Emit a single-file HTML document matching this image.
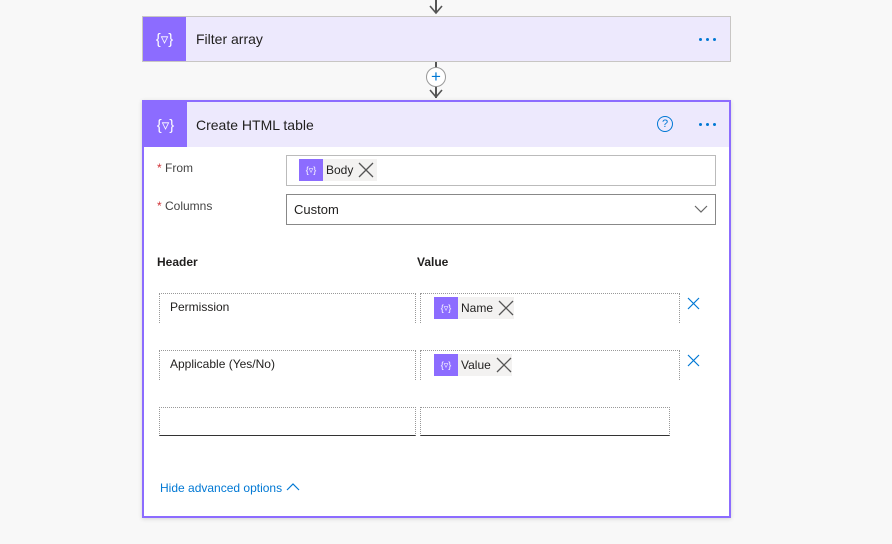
<!DOCTYPE html>
<html><head><style>
*{box-sizing:border-box;margin:0;padding:0}
body{width:892px;height:544px;background:#f8f8f8;font-family:"Liberation Sans",sans-serif;position:relative;overflow:hidden;color:#201f1e}
.a{position:absolute}
.ic{background:#8c6cff;display:flex;align-items:center;justify-content:center;color:#fff}
.tok{position:absolute;height:22px;background:#f3f2f1;display:flex;align-items:center;font-size:12px}
.tok .ic{width:24px;height:22px;font-size:9px}
.tok svg{margin-left:5px}
.dash{border:1px dotted #999}
.dots{position:absolute;display:flex;gap:4px}
.dots i{width:3px;height:3px;border-radius:50%;background:#0078d4;display:block}
</style></head><body>
<div class="a" style="left:435px;top:0;width:2px;height:12px;background:#555"></div>
<svg class="a" style="left:428px;top:4px" width="16" height="12"><path d="M2 2 L8 9 L14 2" fill="none" stroke="#555" stroke-width="1.6"/></svg>
<div class="a" style="left:142px;top:16px;width:589px;height:46px;background:#ede9fd;border:1px solid #c8c6c4"></div>
<div class="a ic" style="left:143px;top:17px;width:43px;height:44px;font-size:15px">{▿}</div>
<div class="a" style="left:196px;top:31px;font-size:14px">Filter array</div>
<div class="dots" style="left:699px;top:38px"><i></i><i></i><i></i></div>
<div class="a" style="left:435px;top:62px;width:2px;height:36px;background:#555"></div>
<div class="a" style="left:426px;top:67px;width:20px;height:20px;border-radius:50%;background:#fff;border:1px solid #999;color:#0078d4;text-align:center;line-height:17px;font-size:17px">+</div>
<svg class="a" style="left:428px;top:88px" width="16" height="12"><path d="M2 2 L8 9 L14 2" fill="none" stroke="#555" stroke-width="1.6"/></svg>
<div class="a" style="left:142px;top:100px;width:589px;height:418px;background:#fff;border:2px solid #8c6cff;box-shadow:0 1px 4px rgba(0,0,0,.15)"></div>
<div class="a" style="left:144px;top:102px;width:585px;height:45px;background:#ede9fd"></div>
<div class="a ic" style="left:144px;top:102px;width:43px;height:45px;font-size:15px">{▿}</div>
<div class="a" style="left:196px;top:117px;font-size:14px">Create HTML table</div>
<div class="a" style="left:657px;top:116px;width:16px;height:16px;border:1.3px solid #0078d4;border-radius:50%;color:#0078d4;font-size:11px;text-align:center;line-height:14px">?</div>
<div class="dots" style="left:699px;top:123px"><i></i><i></i><i></i></div>
<div class="a" style="left:157px;top:161px;font-size:12px;color:#444"><span style="color:#d13438">*</span> From</div>
<div class="a" style="left:286px;top:155px;width:430px;height:31px;border:1px solid #bbb"></div>
<div class="tok" style="left:299px;top:159px;width:78px"><div class="ic">{▿}</div><span style="margin-left:3px">Body</span><svg width="16" height="16"><path d="M1 1L15 15M15 1L1 15" stroke="#555" stroke-width="1.3"/></svg></div>
<div class="a" style="left:157px;top:199px;font-size:12px;color:#444"><span style="color:#d13438">*</span> Columns</div>
<div class="a" style="left:286px;top:194px;width:430px;height:31px;border:1px solid #888"></div>
<div class="a" style="left:294px;top:202px;font-size:13px">Custom</div>
<svg class="a" style="left:694px;top:204px" width="14" height="10"><path d="M1 2 L7 8 L13 2" fill="none" stroke="#666" stroke-width="1.2"/></svg>
<div class="a" style="left:157px;top:255px;font-size:12px;font-weight:bold">Header</div>
<div class="a" style="left:417px;top:255px;font-size:12px;font-weight:bold">Value</div>
<div class="a dash" style="left:159px;top:293px;width:257px;height:30px;border-bottom:none"></div>
<div class="a" style="left:170px;top:300px;font-size:12px">Permission</div>
<div class="a dash" style="left:420px;top:293px;width:260px;height:30px;border-bottom:none"></div>
<div class="tok" style="left:434px;top:297px;width:80px"><div class="ic">{▿}</div><span style="margin-left:3px">Name</span><svg width="16" height="16"><path d="M1 1L15 15M15 1L1 15" stroke="#555" stroke-width="1.3"/></svg></div>
<svg class="a" style="left:687px;top:297px" width="13" height="13"><path d="M1 1L12 12M12 1L1 12" stroke="#0078d4" stroke-width="1.2"/></svg>
<div class="a dash" style="left:159px;top:350px;width:257px;height:30px;border-bottom:none"></div>
<div class="a" style="left:170px;top:357px;font-size:12px">Applicable (Yes/No)</div>
<div class="a dash" style="left:420px;top:350px;width:260px;height:30px;border-bottom:none"></div>
<div class="tok" style="left:434px;top:354px;width:78px"><div class="ic">{▿}</div><span style="margin-left:3px">Value</span><svg width="16" height="16"><path d="M1 1L15 15M15 1L1 15" stroke="#555" stroke-width="1.3"/></svg></div>
<svg class="a" style="left:687px;top:354px" width="13" height="13"><path d="M1 1L12 12M12 1L1 12" stroke="#0078d4" stroke-width="1.2"/></svg>
<div class="a dash" style="left:159px;top:407px;width:257px;height:29px;border-bottom:1px solid #333"></div>
<div class="a dash" style="left:420px;top:407px;width:250px;height:29px;border-bottom:1px solid #333"></div>
<div class="a" style="left:160px;top:481px;font-size:12px;color:#0078d4">Hide advanced options</div>
<svg class="a" style="left:286px;top:483px" width="14" height="9"><path d="M1 7 L7 1 L13 7" fill="none" stroke="#0078d4" stroke-width="1.2"/></svg>
</body></html>
